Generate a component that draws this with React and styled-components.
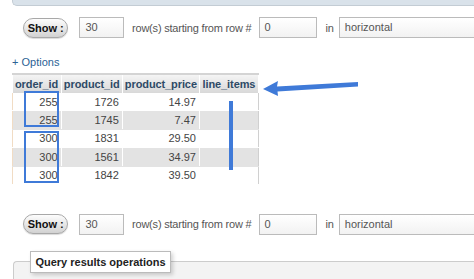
import React from 'react';
import styled, { createGlobalStyle } from 'styled-components';

const Global = createGlobalStyle`
  html, body { margin: 0; padding: 0; background: #fff; }
  body {
    width: 474px;
    height: 279px;
    overflow: hidden;
    font-family: "Liberation Sans", Arial, sans-serif;
    font-size: 11px;
    color: #444;
  }
`;

const Page = styled.div`
  position: relative;
  width: 474px;
  height: 279px;
  overflow: hidden;
`;

const TopBar = styled.div`
  margin-left: 12px;
  height: 5px;
  background: #d9e2ea;
  border: 1px solid #c3ccd4;
  border-top: none;
  border-right: none;
  border-bottom-left-radius: 5px;
`;

const Controls = styled.div`
  display: flex;
  align-items: center;
  height: 21px;
  padding-left: 23px;
  margin-top: ${(p) => p.top}px;
  white-space: nowrap;
`;

const ShowButton = styled.button`
  width: 47px;
  height: 20px;
  padding: 0;
  border: 1px solid #a8a8a8;
  border-radius: 11px;
  background: linear-gradient(#fdfdfd, #d2d2d2);
  box-shadow: 0 1px 1px rgba(0, 0, 0, 0.15);
  font-family: "Liberation Sans", Arial, sans-serif;
  font-size: 11px;
  font-weight: bold;
  color: #111;
  margin-right: 11px;
`;

const Field = styled.div`
  box-sizing: border-box;
  width: ${(p) => p.w}px;
  height: 21px;
  border: 1px solid #bbb;
  border-right: ${(p) => (p.open ? 'none' : '1px solid #bbb')};
  background: linear-gradient(#fff, #f2f2f2);
  padding-left: 5px;
  line-height: 19px;
  font-size: 11px;
  color: #555;
`;

const Label = styled.span`
  font-size: 11px;
  color: #555;
  margin: 0 ${(p) => p.mr}px 0 ${(p) => p.ml}px;
  letter-spacing: -0.2px;
`;

const Options = styled.a`
  display: block;
  margin: 18px 0 0 12px;
  height: 12px;
  line-height: 12px;
  font-size: 11px;
  color: #2b6295;
  text-decoration: none;
`;

const TableWrap = styled.div`
  margin: 5px 0 0 12px;
  width: 247px;
  border-top: 2px solid #d4d4d4;
`;

const Table = styled.table`
  border-collapse: collapse;
  font-size: 11px;
`;

const Th = styled.th`
  height: 18px;
  padding: 0 2px;
  font-weight: bold;
  color: #2e4a66;
  background: linear-gradient(#f4f4f4, #d8d8d8);
  border-right: 1px solid #fff;
  text-align: center;
  white-space: nowrap;
  letter-spacing: -0.1px;
`;

const Td = styled.td`
  height: 17.4px;
  padding: 0 3px 0 0;
  text-align: right;
  color: #444;
  background: ${(p) => (p.odd ? '#e3e3e3' : '#fff')};
  border-left: ${(p) => (p.first ? '1px solid #f1dcc4' : 'none')};
  border-right: 1px solid ${(p) => (p.last ? '#d0d0d0' : '#fff')};
  border-bottom: 1px solid ${(p) => (p.odd ? '#e3e3e3' : '#fff')};
  width: ${(p) => p.w}px;
`;

const Mark = styled.div`
  position: absolute;
  box-sizing: border-box;
  border: 2px solid #3f7ad8;
  left: ${(p) => p.x}px;
  top: ${(p) => p.y}px;
  width: ${(p) => p.w}px;
  height: ${(p) => p.h}px;
`;

const Bar = styled.div`
  position: absolute;
  left: 229px;
  top: 101px;
  width: 4px;
  height: 69px;
  background: #3f7ad8;
`;

const Arrow = styled.svg`
  position: absolute;
  left: 262px;
  top: 78px;
`;

const Fieldset = styled.div`
  position: relative;
  margin: 26px 0 0 13px;
  height: 30px;
  border-top: 1px solid #ccc;
  border-left: 1px solid #ccc;
  border-top-left-radius: 4px;
  background: #f3f3f3;
`;

const Legend = styled.div`
  position: absolute;
  left: 16px;
  top: -11px;
  width: 141px;
  height: 22px;
  box-sizing: border-box;
  background: #fff;
  border: 1px solid #bbb;
  box-shadow: 2px 2px 4px rgba(0, 0, 0, 0.18);
  font-weight: bold;
  font-size: 11px;
  color: #222;
  text-align: center;
  line-height: 20px;
`;

const rows = [
  ['255', '1726', '14.97'],
  ['255', '1745', '7.47'],
  ['300', '1831', '29.50'],
  ['300', '1561', '34.97'],
  ['300', '1842', '39.50'],
];

const ControlRow = ({ top }) => (
  <Controls top={top}>
    <ShowButton>Show :</ShowButton>
    <Field w={46}>30</Field>
    <Label ml={8} mr={7}>row(s) starting from row #</Label>
    <Field w={60}>0</Field>
    <Label ml={9} mr={5}>in</Label>
    <Field w={140} open>horizontal</Field>
  </Controls>
);

export default function App() {
  return (
    <Page>
      <Global />
      <TopBar />
      <ControlRow top={11} />
      <Options>+ Options</Options>
      <TableWrap>
        <Table>
          <thead>
            <tr>
              <Th>order_id</Th>
              <Th>product_id</Th>
              <Th>product_price</Th>
              <Th>line_items</Th>
            </tr>
          </thead>
          <tbody>
            {rows.map((r, i) => (
              <tr key={i}>
                <Td first odd={i % 2 === 1} w={47}>{r[0]}</Td>
                <Td odd={i % 2 === 1} w={58}>{r[1]}</Td>
                <Td odd={i % 2 === 1} w={73}>{r[2]}</Td>
                <Td last odd={i % 2 === 1} w={58}></Td>
              </tr>
            ))}
          </tbody>
        </Table>
      </TableWrap>
      <ControlRow top={29} />
      <Fieldset>
        <Legend>Query results operations</Legend>
      </Fieldset>
      <Mark x={24} y={91} w={35} h={36} />
      <Mark x={24} y={131} w={35} h={52} />
      <Bar />
      <Arrow width="100" height="22" viewBox="0 0 100 22">
        <path d="M1 11 L16 3 L15 8.5 L96 4 L96 8.5 L15.5 13.5 L16 18 Z" fill="#3f7ad8" />
      </Arrow>
    </Page>
  );
}
